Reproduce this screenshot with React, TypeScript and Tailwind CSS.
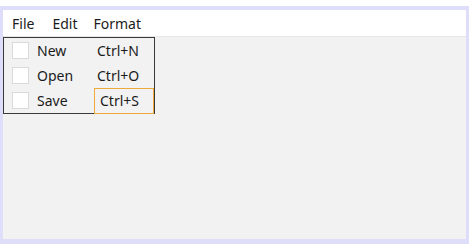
import React from "react";

const items = [
  { label: "New", shortcut: "Ctrl+N" },
  { label: "Open", shortcut: "Ctrl+O" },
  { label: "Save", shortcut: "Ctrl+S", focused: true },
];

export default function App() {
  return (
    <div
      className="w-[474px] h-[248px] bg-white pt-[6px] text-[14px] text-[#1b1b1b]"
      style={{ fontFamily: '"Noto Sans", "Liberation Sans", sans-serif' }}
    >
      <div className="w-[469px] h-[238px] flex flex-col border-x-[3px] border-t-[4px] border-b-[5px] border-[#dedefa] relative">
        {/* menu bar */}
        <div className="h-[27px] bg-white flex items-center pl-[9px] border-b border-[#e6e6e6]">
          <span>File</span>
          <span className="ml-[18px]">Edit</span>
          <span className="ml-[16px]">Format</span>
        </div>

        {/* client area */}
        <div className="flex-1 bg-[#f2f2f2]" />

        {/* dropdown menu */}
        <div className="absolute left-0 top-[27px] w-[152px] bg-[#f2f2f2] border border-[#3a3a3a]">
          {items.map((it) => (
            <div key={it.label} className="h-[25px] flex items-center">
              <div className="w-[17px] h-[17px] ml-[8px] bg-white border border-[#dadada]" />
              <span className="ml-[8px] w-[60px]">{it.label}</span>
              <span
                className={
                  it.focused
                    ? "h-[26px] -ml-[3px] pl-[5px] flex-1 flex items-center border border-[#efa83a]"
                    : "flex-1"
                }
              >
                {it.shortcut}
              </span>
            </div>
          ))}
        </div>
      </div>
    </div>
  );
}
